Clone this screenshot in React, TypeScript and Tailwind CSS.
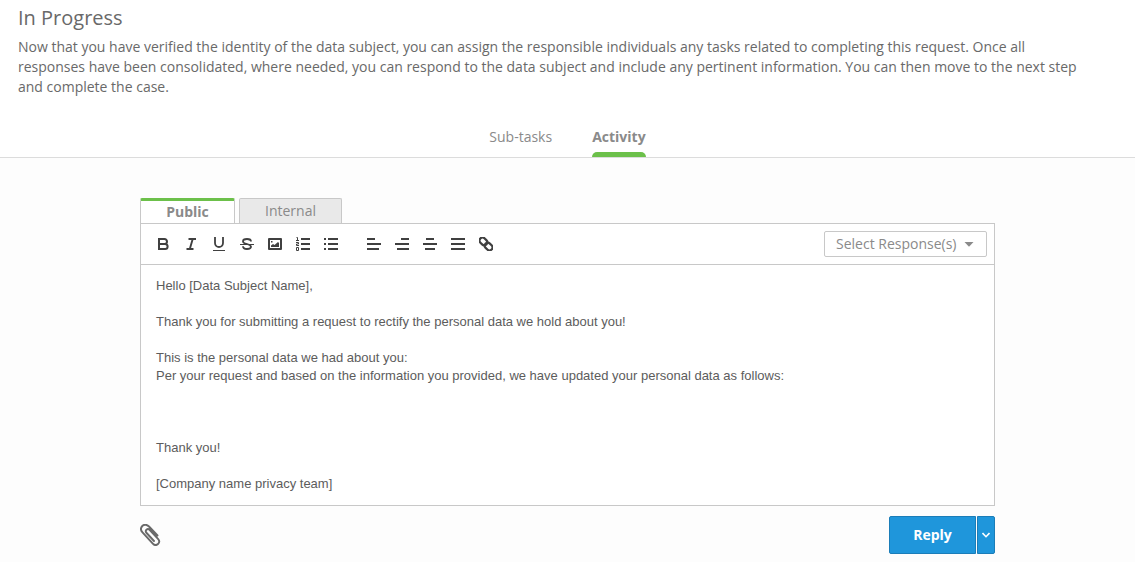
import { useState } from "react";
import type { ReactNode } from "react";

const MESSAGE = `Hello [Data Subject Name],

Thank you for submitting a request to rectify the personal data we hold about you!

This is the personal data we had about you:
Per your request and based on the information you provided, we have updated your personal data as follows:



Thank you!

[Company name privacy team]`;

function Icon({ children }: { children: ReactNode }) {
  return (
    <svg width="14" height="14" viewBox="0 0 14 14" fill="none" stroke="currentColor" strokeWidth="2" aria-hidden="true">
      {children}
    </svg>
  );
}

const textTools: { label: string; icon: ReactNode }[] = [
  {
    label: "Bold",
    icon: <path d="M3 2h5.5a2.4 2.4 0 0 1 0 5H3M8.5 7h.6a2.5 2.5 0 0 1 0 5H3M3 1v12" />,
  },
  {
    label: "Italic",
    icon: <path d="M4.5 2H12M2.500 12H9.500M8.700 2L5.800 12" strokeWidth="1.900" />,
  },
  {
    label: "Underline",
    icon: (
      <>
        <path d="M3 0v6a4 4 0 0 0 8 0V0" strokeWidth="1.800" />
        <path d="M1 13.500h12" strokeWidth="1" />
      </>
    ),
  },
  {
    label: "Strikethrough",
    icon: (
      <>
        <path d="M11 4.500C11 2.800 9.500 2 7 2S3 2.900 3 4.400C3 6 5 6.500 7 7s4 1.200 4 2.800C11 11.300 9.500 12 7 12S3 11.200 3 9.300" strokeWidth="1.800" />
        <path d="M0 7.500h14" strokeWidth="1" />
      </>
    ),
  },
  {
    label: "Insert image",
    icon: (
      <>
        <path d="M1 2h12v10H1z" strokeLinejoin="round" />
        <path d="M3 10V8.500L5 7l1.500 1L10 5l1 1v4z" fill="currentColor" stroke="none" />
        <path d="M3 4h1.500v1.500H3z" fill="currentColor" stroke="none" />
      </>
    ),
  },
  {
    label: "Numbered list",
    icon: (
      <>
        <path d="M5 2h9M5 7h9M5 12h9" />
        <path d="M.5.500h1V4M0 3.500h3M0 5.500h2.500v1.500H.500v1.500H3M.500 10.500h2v3h-2z" strokeWidth="1" />
      </>
    ),
  },
  {
    label: "Bulleted list",
    icon: <path d="M4 2h10M4 7h10M4 12h10M0 2h2M0 7h2M0 12h2" />,
  },
];

const layoutTools: { label: string; icon: ReactNode }[] = [
  { label: "Align left", icon: <path d="M0 2h8M0 7h14M0 12h12" /> },
  { label: "Align right", icon: <path d="M6 2h8M0 7h14M2 12h12" /> },
  { label: "Align center", icon: <path d="M3 2h8M0 7h14M2 12h10" /> },
  { label: "Justify", icon: <path d="M0 2h14M0 7h14M0 12h14" /> },
  {
    label: "Insert link",
    icon: (
      <g transform="rotate(45 7 7)" strokeWidth="2.200">
        <rect x="-.9" y="4" width="8.400" height="6" rx="3" />
        <rect x="6.500" y="4" width="8.400" height="6" rx="3" />
      </g>
    ),
  },
];

function Tools({ items }: { items: { label: string; icon: ReactNode }[] }) {
  return (
    <div className="flex">
      {items.map((t) => (
        <button key={t.label} type="button" aria-label={t.label} title={t.label} className="flex h-7 w-7 items-center justify-center text-[#404040]">
          <Icon>{t.icon}</Icon>
        </button>
      ))}
    </div>
  );
}

export default function App() {
  const [message, setMessage] = useState(MESSAGE);
  return (
    <main className="min-h-screen bg-[#fdfdfd] font-['Open_Sans',sans-serif] text-sm text-[#696969]">
      <header className="border-b border-[#dcdcdc] bg-white">
        <div className="px-[18px] pt-1">
          <h1 className="text-xl leading-7">In Progress</h1>
          <p className="mt-[5px] max-w-[1072px] leading-5">
            Now that you have verified the identity of the data subject, you can assign the responsible individuals any tasks related to
            completing this request. Once all responses have been consolidated, where needed, you can respond to the data subject and
            include any pertinent information. You can then move to the next step and complete the case.
          </p>
        </div>
        <nav className="mt-5 flex h-10 justify-center gap-10 text-[#8a8a8a]" aria-label="Request sections">
          <button type="button" className="flex flex-col justify-between pt-2">
            <span className="leading-6">Sub-tasks</span>
          </button>
          <button type="button" aria-current="page" className="flex flex-col justify-between pt-2 font-bold">
            <span className="leading-6">Activity</span>
            <span className="h-[5px] w-full rounded-t-[5px] bg-[#6cc04a]" />
          </button>
        </nav>
      </header>

      <section className="mx-auto max-w-[855px] pt-10">
        <div role="tablist" aria-label="Visibility" className="flex gap-1 text-[#8a8a8a]">
          <button role="tab" aria-selected="true" type="button" className="h-[25px] w-[95px] rounded-t-xs border-x border-t-3 border-x-[#c8c8c8] border-t-[#6cc04a] bg-white font-bold leading-5">
            Public
          </button>
          <button role="tab" aria-selected="false" type="button" className="h-[25px] w-[103px] rounded-t-xs border-x border-t border-[#c8c8c8] bg-[#e9e9e9] leading-5">
            Internal
          </button>
        </div>

        <div className="border border-[#c8c8c8] bg-white">
          <div className="flex h-[41px] items-center justify-between border-b border-[#c8c8c8] pr-[7px] pl-2">
            <div className="flex gap-[15px]">
              <Tools items={textTools} />
              <Tools items={layoutTools} />
            </div>
            <div className="relative">
              <select aria-label="Select Response(s)" className="block h-[26px] w-[163px] appearance-none rounded-xs border border-[#c8c8c8] bg-white pl-[11px] text-[#8a8a8a]">
                <option>Select Response(s)</option>
              </select>
              <svg className="pointer-events-none absolute top-[11px] right-[13px] text-[#8a8a8a]" width="10" height="5" viewBox="0 0 10 5" fill="currentColor" aria-hidden="true">
                <path d="M.5 0h9L5 4.800z" />
              </svg>
            </div>
          </div>
          <textarea
            aria-label="Message"
            rows={12}
            value={message}
            onChange={(e) => setMessage(e.target.value)}
            className="block w-full resize-none overflow-hidden bg-white px-[15px] py-3 font-['Liberation_Sans',Arial,sans-serif] text-[13px] leading-[18px] text-[#5c5c5c] outline-none"
          />
        </div>

        <div className="flex items-center justify-between pt-[10px]">
          <button type="button" aria-label="Attach file" className="text-[#696969]">
            <svg width="21" height="22" viewBox="0 0 21 22" fill="none" stroke="currentColor" strokeWidth="1.900" strokeLinecap="round" strokeLinejoin="round" aria-hidden="true">
              <path d="M17.500 11.500L9 2.500C6.800.2 3.900.3 2.300 2c-1.700 1.800-1.500 4.500.2 6.400l10.300 11.200c1.600 1.700 3.800 1.700 5.200.4 1.500-1.400 1.500-3.500 0-5.200L9.800 6C8.700 4.900 7.400 4.900 6.500 5.700c-.9.9-.9 2.200.1 3.300l7.400 8" />
            </svg>
          </button>
          <div className="flex gap-px font-bold text-white">
            <button type="button" className="h-[38px] w-[87px] rounded-l-xs border border-[#1b7db8] bg-[#1f96db]">
              Reply
            </button>
            <button type="button" aria-label="More reply options" className="flex h-[38px] w-[18px] items-center justify-center rounded-r-xs border border-[#1b7db8] bg-[#1f96db]">
              <svg width="8" height="6" viewBox="0 0 8 6" fill="none" stroke="currentColor" strokeWidth="1.600" aria-hidden="true">
                <path d="M.5 1L4 4.700 7.500 1" />
              </svg>
            </button>
          </div>
        </div>
      </section>
    </main>
  );
}
